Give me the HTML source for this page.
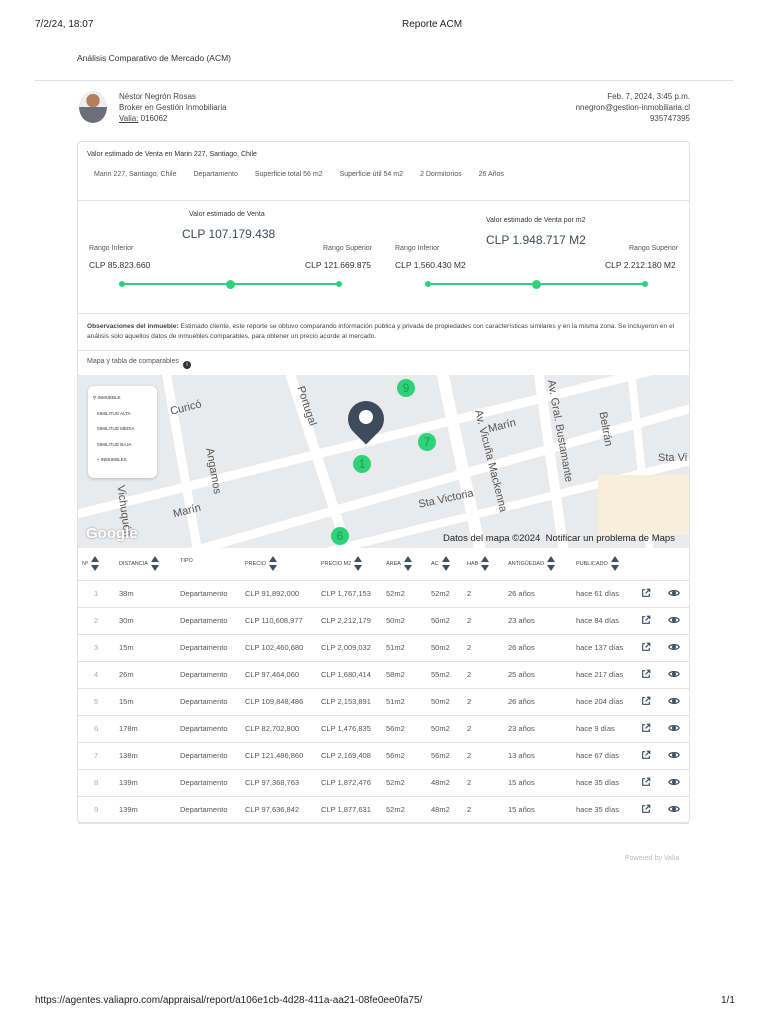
<!DOCTYPE html>
<html><head><meta charset="utf-8"><style>
*{margin:0;padding:0;box-sizing:border-box}
body{width:768px;height:1024px;background:#fff;font-family:"Liberation Sans",sans-serif;color:#333;position:relative;overflow:hidden}
.a{position:absolute;white-space:nowrap}
.s{font-size:8px;color:#444}
.xs{font-size:7px;color:#555}
.road{position:absolute;background:#fff}
.m{position:absolute;font-size:11px;color:#555}
.dot{position:absolute;width:18px;height:18px;border-radius:50%;background:#2dd27a;color:#1a9d55;font-size:12px;text-align:center;line-height:18px}
table{position:absolute;left:78px;top:548px;width:611px;border-collapse:collapse;font-size:7.5px;color:#555;table-layout:fixed}
td,th{height:27px;border-bottom:1px solid #dde3ea;text-align:left;padding-left:4px;font-weight:normal;overflow:hidden;white-space:nowrap}
th{height:32px;font-size:5.5px;color:#444}
.ar{display:inline-block;width:9px;height:15px;vertical-align:middle;margin-left:3px;position:relative}
.ar:before,.ar:after{content:"";position:absolute;left:0;border-left:4.5px solid transparent;border-right:4.5px solid transparent}
.ar:before{top:0;border-bottom:6.5px solid #3d5066}
.ar:after{bottom:0;border-top:6.5px solid #3d5066}
</style></head><body>
<svg width="0" height="0" style="position:absolute"><defs>
<symbol id="ext" viewBox="0 0 12 12"><path d="M5 2H2v8h8V7" fill="none" stroke="#3d5066" stroke-width="1.4"/><path d="M7 1.5h3.5V5M10.5 1.5L5.5 6.5" fill="none" stroke="#3d5066" stroke-width="1.4"/></symbol>
<symbol id="eye" viewBox="0 0 12 12"><path d="M0.8 6C2.5 2.8 9.5 2.8 11.2 6C9.5 9.2 2.5 9.2 0.8 6Z" fill="none" stroke="#3d5066" stroke-width="1.3"/><circle cx="6" cy="6" r="2" fill="#3d5066"/></symbol>
</defs></svg>
<div class="a" style="left:35px;top:19px;font-size:10px;color:#222">7/2/24, 18:07</div>
<div class="a" style="left:402px;top:19px;font-size:10px;color:#222">Reporte ACM</div>
<div class="a" style="left:77px;top:53px;font-size:8.5px;color:#333">Análisis Comparativo de Mercado (ACM)</div>
<div class="a" style="left:35px;top:80px;width:698px;height:1px;background:#dde2e8"></div>
<div class="a" style="left:79px;top:91px;width:28px;height:32px;border-radius:50%;background:radial-gradient(circle at 50% 30%,#b08060 0 25%,transparent 26%),linear-gradient(#eee 50%,#6b6f78 50%)"></div>
<div class="a s" style="left:119px;top:91px;line-height:11px">Néstor Negrón Rosas<br>Broker en Gestión Inmobiliaria<br><span style="text-decoration:underline">Valia:</span> 016062</div>
<div class="a s" style="right:78px;top:91px;line-height:11px;text-align:right">Feb. 7, 2024, 3:45 p.m.<br>nnegron@gestion-inmobiliaria.cl<br>935747395</div>
<div class="a" style="left:77px;top:141px;width:613px;height:682px;border:1px solid #dde3ea;border-radius:4px"></div>
<div class="a" style="left:87px;top:151px;font-size:7px;color:#333">Valor estimado de Venta en Marin 227, Santiago, Chile</div>
<div class="a xs" style="left:94px;top:171px">Marin 227, Santiago, Chile<span style="margin-left:17px">Departamento</span><span style="margin-left:17px">Superficie total 56 m2</span><span style="margin-left:17px">Superficie útil 54 m2</span><span style="margin-left:17px">2 Dormitorios</span><span style="margin-left:17px">26 Años</span></div>
<div class="a" style="left:78px;top:200px;width:611px;height:1px;background:#dde3ea"></div>
<div class="a" style="left:189px;top:211px;font-size:7px">Valor estimado de Venta</div>
<div class="a" style="left:182px;top:227px;font-size:12px;color:#3d4a5a">CLP 107.179.438</div>
<div class="a xs" style="left:89px;top:245px">Rango Inferior</div>
<div class="a" style="left:89px;top:260px;font-size:8.5px">CLP 85.823.660</div>
<div class="a xs" style="left:323px;top:245px">Rango Superior</div>
<div class="a" style="left:305px;top:260px;font-size:8.5px">CLP 121.669.875</div>
<div class="a" style="left:486px;top:217px;font-size:7px">Valor estimado de Venta por m2</div>
<div class="a" style="left:486px;top:233px;font-size:12px;color:#3d4a5a">CLP 1.948.717 M2</div>
<div class="a xs" style="left:395px;top:245px">Rango Inferior</div>
<div class="a" style="left:395px;top:260px;font-size:8.5px">CLP 1.560.430 M2</div>
<div class="a xs" style="left:629px;top:245px">Rango Superior</div>
<div class="a" style="left:605px;top:260px;font-size:8.5px">CLP 2.212.180 M2</div>
<div class="a" style="left:122px;top:283px;width:217px;height:2px;background:#2dd27a"></div>
<div class="a" style="left:119px;top:281px;width:6px;height:6px;border-radius:50%;background:#2dd27a"></div>
<div class="a" style="left:226px;top:280px;width:9px;height:9px;border-radius:50%;background:#2dd27a"></div>
<div class="a" style="left:336px;top:281px;width:6px;height:6px;border-radius:50%;background:#2dd27a"></div>
<div class="a" style="left:428px;top:283px;width:217px;height:2px;background:#2dd27a"></div>
<div class="a" style="left:425px;top:281px;width:6px;height:6px;border-radius:50%;background:#2dd27a"></div>
<div class="a" style="left:532px;top:280px;width:9px;height:9px;border-radius:50%;background:#2dd27a"></div>
<div class="a" style="left:642px;top:281px;width:6px;height:6px;border-radius:50%;background:#2dd27a"></div>
<div class="a" style="left:78px;top:313px;width:611px;height:1px;background:#dde3ea"></div>
<div class="a" style="left:87px;top:322px;font-size:6.6px;line-height:10px;white-space:normal;width:598px;color:#444"><b>Observaciones del inmueble:</b> Estimado cliente, este reporte se obtuvo comparando información pública y privada de propiedades con características similares y en la misma zona. Se incluyeron en el análisis solo aquellos datos de inmuebles comparables, para obtener un precio acorde al mercado.</div>
<div class="a" style="left:78px;top:350px;width:611px;height:1px;background:#dde3ea"></div>
<div class="a xs" style="left:87px;top:358px">Mapa y tabla de comparables</div>
<div class="a" style="left:183px;top:361px;width:8px;height:8px;border-radius:50%;background:#333;color:#fff;font-size:6px;text-align:center;line-height:8px">i</div>
<div class="a" style="left:78px;top:375px;width:611px;height:173px;background:#e9eaec;overflow:hidden">
 <div class="road" style="left:-20px;top:52px;width:700px;height:9px;transform:rotate(-14deg)"></div>
 <div class="road" style="left:-20px;top:110px;width:700px;height:9px;transform:rotate(-16deg)"></div>
 <div class="road" style="left:-20px;top:150px;width:720px;height:8px;transform:rotate(-14deg)"></div>
 <div class="road" style="left:100px;top:-30px;width:9px;height:240px;transform:rotate(-10deg)"></div>
 <div class="road" style="left:240px;top:-20px;width:10px;height:240px;transform:rotate(-18deg)"></div>
 <div class="road" style="left:380px;top:-20px;width:12px;height:240px;transform:rotate(-12deg)"></div>
 <div class="road" style="left:470px;top:-20px;width:10px;height:240px;transform:rotate(-8deg)"></div>
 <div class="road" style="left:560px;top:-20px;width:8px;height:240px;transform:rotate(-6deg)"></div>
 <div class="a" style="left:520px;top:100px;width:91px;height:60px;background:#f7efd9"></div>
 <div class="m" style="left:92px;top:27px;transform:rotate(-14deg)">Curicó</div>
 <div class="m" style="left:95px;top:130px;transform:rotate(-14deg)">Marín</div>
 <div class="m" style="left:410px;top:45px;transform:rotate(-14deg)">Marín</div>
 <div class="m" style="left:340px;top:118px;transform:rotate(-12deg)">Sta Victoria</div>
 <div class="m" style="left:208px;top:25px;transform:rotate(72deg)">Portugal</div>
 <div class="m" style="left:112px;top:90px;transform:rotate(80deg)">Angamos</div>
 <div class="m" style="left:360px;top:80px;transform:rotate(76deg)">Av. Vicuña Mackenna</div>
 <div class="m" style="left:430px;top:50px;transform:rotate(80deg)">Av. Gral. Bustamante</div>
 <div class="m" style="left:510px;top:48px;transform:rotate(80deg)">Beltrán</div>
 <div class="m" style="left:580px;top:77px">Sta Vi</div>
 <div class="m" style="left:20px;top:130px;transform:rotate(82deg)">Vichuquén</div>
 <div class="dot" style="left:319px;top:4px">9</div>
 <div class="dot" style="left:340px;top:58px">7</div>
 <div class="dot" style="left:275px;top:80px">1</div>
 <div class="dot" style="left:253px;top:152px">6</div>
 <div class="a" style="left:270px;top:26px;width:36px;height:36px;border-radius:50% 50% 50% 0;transform:rotate(-45deg);background:#3d4b5b"></div>
 <div class="a" style="left:281px;top:35px;width:14px;height:14px;background:#fff;border-radius:50%"></div>
 <div class="a" style="left:10px;top:11px;width:69px;height:92px;background:#fff;border-radius:6px;box-shadow:0 1px 3px rgba(0,0,0,.2);font-size:4.5px;color:#333;line-height:15.5px;padding:4px 0 0 5px">⚲ INMUEBLE<br>&nbsp;&nbsp;&nbsp;SIMILITUD ALTA<br>&nbsp;&nbsp;&nbsp;SIMILITUD MEDIA<br>&nbsp;&nbsp;&nbsp;SIMILITUD BAJA<br>&nbsp;&nbsp;&nbsp;+ INMUEBLES</div>
 <div class="a" style="left:8px;top:150px;font-size:15px;color:#fff;font-weight:bold;text-shadow:0 0 2px #888">Google</div>
 <div class="a" style="left:365px;top:158px;font-size:9.5px;color:#222">Datos del mapa ©2024&nbsp; Notificar un problema de Maps</div>
</div>
<table>
<colgroup><col style="width:37px"><col style="width:61px"><col style="width:65px"><col style="width:76px"><col style="width:65px"><col style="width:45px"><col style="width:36px"><col style="width:41px"><col style="width:68px"><col style="width:65px"><col style="width:27px"><col style="width:25px"></colgroup>
<tr><th>Nº<span class="ar"></span></th><th>DISTANCIA<span class="ar"></span></th><th style="vertical-align:top;padding-top:10px">TIPO</th><th>PRECIO<span class="ar"></span></th><th>PRECIO M2<span class="ar"></span></th><th>ÁREA<span class="ar"></span></th><th>AC<span class="ar"></span></th><th>HAB<span class="ar"></span></th><th>ANTIGÜEDAD<span class="ar"></span></th><th>PUBLICADO<span class="ar"></span></th><th></th><th></th></tr>
<tr><td style="color:#aaa;padding-left:16px">1</td><td>38m</td><td>Departamento</td><td>CLP 91,892,000</td><td>CLP 1,767,153</td><td>52m2</td><td>52m2</td><td>2</td><td>26 años</td><td>hace 61 días</td><td><svg width="10" height="10"><use href="#ext"/></svg></td><td><svg width="12" height="12"><use href="#eye"/></svg></td></tr>
<tr><td style="color:#aaa;padding-left:16px">2</td><td>30m</td><td>Departamento</td><td>CLP 110,608,977</td><td>CLP 2,212,179</td><td>50m2</td><td>50m2</td><td>2</td><td>23 años</td><td>hace 84 días</td><td><svg width="10" height="10"><use href="#ext"/></svg></td><td><svg width="12" height="12"><use href="#eye"/></svg></td></tr>
<tr><td style="color:#aaa;padding-left:16px">3</td><td>15m</td><td>Departamento</td><td>CLP 102,460,680</td><td>CLP 2,009,032</td><td>51m2</td><td>50m2</td><td>2</td><td>26 años</td><td>hace 137 días</td><td><svg width="10" height="10"><use href="#ext"/></svg></td><td><svg width="12" height="12"><use href="#eye"/></svg></td></tr>
<tr><td style="color:#aaa;padding-left:16px">4</td><td>26m</td><td>Departamento</td><td>CLP 97,464,060</td><td>CLP 1,680,414</td><td>58m2</td><td>55m2</td><td>2</td><td>25 años</td><td>hace 217 días</td><td><svg width="10" height="10"><use href="#ext"/></svg></td><td><svg width="12" height="12"><use href="#eye"/></svg></td></tr>
<tr><td style="color:#aaa;padding-left:16px">5</td><td>15m</td><td>Departamento</td><td>CLP 109,848,486</td><td>CLP 2,153,891</td><td>51m2</td><td>50m2</td><td>2</td><td>26 años</td><td>hace 204 días</td><td><svg width="10" height="10"><use href="#ext"/></svg></td><td><svg width="12" height="12"><use href="#eye"/></svg></td></tr>
<tr><td style="color:#aaa;padding-left:16px">6</td><td>178m</td><td>Departamento</td><td>CLP 82,702,800</td><td>CLP 1,476,835</td><td>56m2</td><td>50m2</td><td>2</td><td>23 años</td><td>hace 9 días</td><td><svg width="10" height="10"><use href="#ext"/></svg></td><td><svg width="12" height="12"><use href="#eye"/></svg></td></tr>
<tr><td style="color:#aaa;padding-left:16px">7</td><td>138m</td><td>Departamento</td><td>CLP 121,486,860</td><td>CLP 2,169,408</td><td>56m2</td><td>56m2</td><td>2</td><td>13 años</td><td>hace 67 días</td><td><svg width="10" height="10"><use href="#ext"/></svg></td><td><svg width="12" height="12"><use href="#eye"/></svg></td></tr>
<tr><td style="color:#aaa;padding-left:16px">8</td><td>139m</td><td>Departamento</td><td>CLP 97,368,763</td><td>CLP 1,872,476</td><td>52m2</td><td>48m2</td><td>2</td><td>15 años</td><td>hace 35 días</td><td><svg width="10" height="10"><use href="#ext"/></svg></td><td><svg width="12" height="12"><use href="#eye"/></svg></td></tr>
<tr><td style="color:#aaa;padding-left:16px">9</td><td>139m</td><td>Departamento</td><td>CLP 97,636,842</td><td>CLP 1,877,631</td><td>52m2</td><td>48m2</td><td>2</td><td>15 años</td><td>hace 35 días</td><td><svg width="10" height="10"><use href="#ext"/></svg></td><td><svg width="12" height="12"><use href="#eye"/></svg></td></tr>
</table>
<div class="a" style="left:625px;top:855px;font-size:7px;color:#bbb">Powered by Valia</div>
<div class="a" style="left:35px;top:995px;font-size:10px;color:#222">https://agentes.valiapro.com/appraisal/report/a106e1cb-4d28-411a-aa21-08fe0ee0fa75/</div>
<div class="a" style="left:721px;top:995px;font-size:10px;color:#222">1/1</div>
</body></html>
